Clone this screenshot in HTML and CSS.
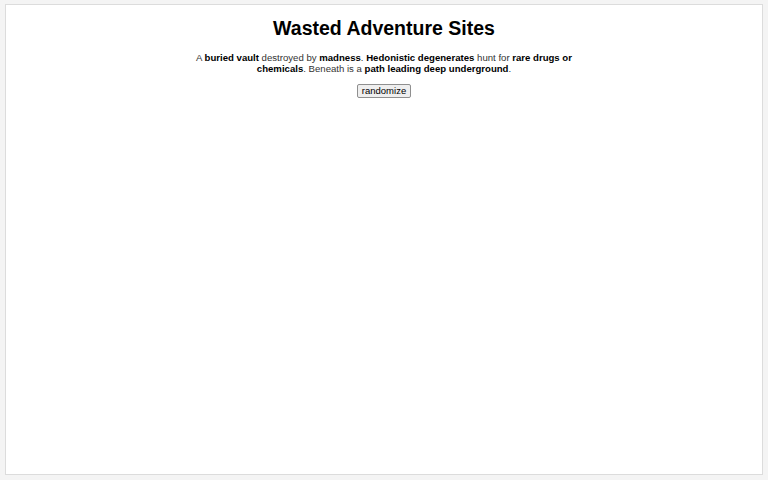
FILE: index.html
```html
<!DOCTYPE html>
<html lang="en">
<head>
    <meta charset="UTF-8">
    <meta name="viewport" content="width=device-width, initial-scale=1.0">
    <title>Wasted Adventure Sites</title>
    <link rel="stylesheet" href="styles.css">
</head>
<body>
    <div class="page">
        <h1>Wasted Adventure Sites</h1>

        <!-- Generated site description -->
        <p class="site" id="site">
            A <b>buried vault</b> destroyed by <b>madness</b>. <b>Hedonistic degenerates</b> hunt for <b>rare drugs or chemicals</b>. Beneath is a <b>path leading deep underground</b>.
        </p>

        <button class="roll" onclick="randomize()">randomize</button>
    </div>

    <script>
        const sites = ['buried vault', 'ruined factory', 'collapsed mall', 'flooded subway', 'overgrown airfield'];
        const causes = ['madness', 'plague', 'war', 'radiation', 'famine'];
        const dwellers = ['Hedonistic degenerates', 'Starving scavengers', 'Zealous cultists', 'Feral mutants'];
        const wants = ['rare drugs or chemicals', 'clean water', 'old-world tech', 'fresh meat'];
        const secrets = ['path leading deep underground', 'sealed armory', 'buried reactor', 'forgotten shrine'];

        function pick(list) {
            return list[Math.floor(Math.random() * list.length)];
        }

        function randomize() {
            document.getElementById('site').innerHTML =
                `A <b>${pick(sites)}</b> destroyed by <b>${pick(causes)}</b>. <b>${pick(dwellers)}</b> hunt for <b>${pick(wants)}</b>. Beneath is a <b>${pick(secrets)}</b>.`;
        }
    </script>
</body>
</html>
```

FILE: styles.css
```css
body {
    margin: 0;
    padding: 4px 5px 5px;
    background-color: #f4f4f4;
    font-family: 'Liberation Sans', Arial, sans-serif;
    color: #000;
}

.page {
    background-color: white;
    border: 1px solid #dcdcdc;
    box-sizing: border-box;
    height: 471px;
    text-align: center;
}

h1 {
    font-size: 19.5px;
    line-height: 22px;
    margin: 12px 0 13px;
}

.site {
    font-size: 9.6px;
    line-height: 11px;
    max-width: 380px;
    margin: 0 auto 6px;
    color: #333;
}

.site b {
    color: #000;
}

.roll {
    font-family: 'Liberation Sans', Arial, sans-serif;
    font-size: 9.5px;
    line-height: 10px;
    padding: 1px 4px;
    color: #000;
    background-color: #efefef;
    border: 1px solid #8f8f8f;
    border-radius: 2px;
}
```
